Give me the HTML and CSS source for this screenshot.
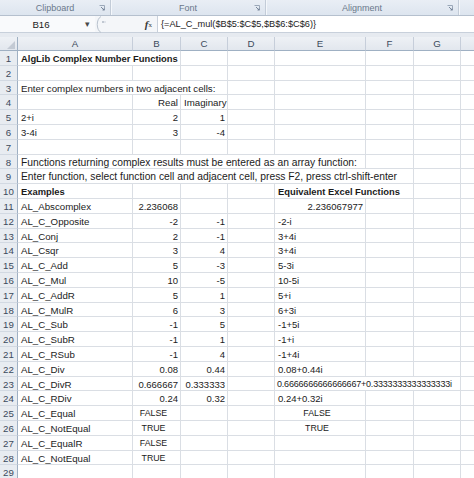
FILE: index.html
```html
<!DOCTYPE html>
<html>
<head>
<meta charset="utf-8">
<link rel="stylesheet" href="styles.css">
</head>
<body>
<div class="app">
  <div class="ribbon">
    <div class="grp g1"><span>Clipboard</span><i class="launch"><svg width="6" height="6" viewBox="0 0 6 6"><path d="M0.5 0.5H5.5V5.5" fill="none" stroke="#9aa7b8" stroke-width="1"/><path d="M2 2L5 5M3.5 5H5V3.5" fill="none" stroke="#6e7e93" stroke-width="0.9"/></svg></i></div>
    <div class="grp g2"><span>Font</span><i class="launch"><svg width="6" height="6" viewBox="0 0 6 6"><path d="M0.5 0.5H5.5V5.5" fill="none" stroke="#9aa7b8" stroke-width="1"/><path d="M2 2L5 5M3.5 5H5V3.5" fill="none" stroke="#6e7e93" stroke-width="0.9"/></svg></i></div>
    <div class="grp g3"><span>Alignment</span><i class="launch"><svg width="6" height="6" viewBox="0 0 6 6"><path d="M0.5 0.5H5.5V5.5" fill="none" stroke="#9aa7b8" stroke-width="1"/><path d="M2 2L5 5M3.5 5H5V3.5" fill="none" stroke="#6e7e93" stroke-width="0.9"/></svg></i></div>
    <div class="grp g4"></div>
  </div>
  <div class="fbar">
    <div class="namebox"><span class="ref">B16</span><span class="drop">&#9662;</span></div>
    <div class="splitter"><svg width="14" height="17" viewBox="0 0 14 17"><path d="M6 0.5C1 3 1 14 6 16.5" fill="none" stroke="#b9c2ce" stroke-width="1"/><circle cx="8" cy="6" r="1" fill="#b0b8c4"/><circle cx="10" cy="6" r="0.8" fill="#c7ced8"/></svg></div>
    <div class="fx"><i>f</i><span>x</span></div>
    <div class="formula">{=AL_C_mul($B$5:$C$5,$B$6:$C$6)}</div>
  </div>
  <div class="gap"></div>
  <div class="sheet">
    <div class="corner"><svg width="8" height="8" viewBox="0 0 8 8"><path d="M8 0V8H0Z" fill="#c3cad4"/></svg></div>
    <div class="ch">A</div><div class="ch">B</div><div class="ch">C</div><div class="ch">D</div><div class="ch">E</div><div class="ch">F</div><div class="ch">G</div><div class="ch"></div>

    <div class="rh">1</div><div class="c b s2">AlgLib Complex Number Functions</div><div class="c"></div><div class="c"></div><div class="c"></div><div class="c"></div><div class="c"></div><div class="c"></div>
    <div class="rh">2</div><div class="c"></div><div class="c"></div><div class="c"></div><div class="c"></div><div class="c"></div><div class="c"></div><div class="c"></div><div class="c"></div>
    <div class="rh">3</div><div class="c s3">Enter complex numbers in two adjacent cells:</div><div class="c"></div><div class="c"></div><div class="c"></div><div class="c"></div><div class="c"></div>
    <div class="rh">4</div><div class="c"></div><div class="c r">Real</div><div class="c r">Imaginary</div><div class="c"></div><div class="c"></div><div class="c"></div><div class="c"></div><div class="c"></div>
    <div class="rh">5</div><div class="c n">2+i</div><div class="c r n">2</div><div class="c r n">1</div><div class="c"></div><div class="c"></div><div class="c"></div><div class="c"></div><div class="c"></div>
    <div class="rh">6</div><div class="c n">3-4i</div><div class="c r n">3</div><div class="c r n">-4</div><div class="c"></div><div class="c"></div><div class="c"></div><div class="c"></div><div class="c"></div>
    <div class="rh">7</div><div class="c"></div><div class="c"></div><div class="c"></div><div class="c"></div><div class="c"></div><div class="c"></div><div class="c"></div><div class="c"></div>
    <div class="rh">8</div><div class="c w s5">Functions returning complex results must be entered as an array function:</div><div class="c"></div><div class="c"></div><div class="c"></div>
    <div class="rh">9</div><div class="c w s6">Enter function, select function cell and adjacent cell, press F2, press ctrl-shift-enter</div><div class="c"></div><div class="c"></div>
    <div class="rh">10</div><div class="c b">Examples</div><div class="c"></div><div class="c"></div><div class="c"></div><div class="c b s2">Equivalent Excel Functions</div><div class="c"></div><div class="c"></div>
    <div class="rh">11</div><div class="c">AL_Abscomplex</div><div class="c r n">2.236068</div><div class="c"></div><div class="c"></div><div class="c r n">2.236067977</div><div class="c"></div><div class="c"></div><div class="c"></div>
    <div class="rh">12</div><div class="c">AL_C_Opposite</div><div class="c r n">-2</div><div class="c r n">-1</div><div class="c"></div><div class="c n">-2-i</div><div class="c"></div><div class="c"></div><div class="c"></div>
    <div class="rh">13</div><div class="c">AL_Conj</div><div class="c r n">2</div><div class="c r n">-1</div><div class="c"></div><div class="c n">3+4i</div><div class="c"></div><div class="c"></div><div class="c"></div>
    <div class="rh">14</div><div class="c">AL_Csqr</div><div class="c r n">3</div><div class="c r n">4</div><div class="c"></div><div class="c n">3+4i</div><div class="c"></div><div class="c"></div><div class="c"></div>
    <div class="rh">15</div><div class="c">AL_C_Add</div><div class="c r n">5</div><div class="c r n">-3</div><div class="c"></div><div class="c n">5-3i</div><div class="c"></div><div class="c"></div><div class="c"></div>
    <div class="rh">16</div><div class="c">AL_C_Mul</div><div class="c r n">10</div><div class="c r n">-5</div><div class="c"></div><div class="c n">10-5i</div><div class="c"></div><div class="c"></div><div class="c"></div>
    <div class="rh">17</div><div class="c">AL_C_AddR</div><div class="c r n">5</div><div class="c r n">1</div><div class="c"></div><div class="c n">5+i</div><div class="c"></div><div class="c"></div><div class="c"></div>
    <div class="rh">18</div><div class="c">AL_C_MulR</div><div class="c r n">6</div><div class="c r n">3</div><div class="c"></div><div class="c n">6+3i</div><div class="c"></div><div class="c"></div><div class="c"></div>
    <div class="rh">19</div><div class="c">AL_C_Sub</div><div class="c r n">-1</div><div class="c r n">5</div><div class="c"></div><div class="c n">-1+5i</div><div class="c"></div><div class="c"></div><div class="c"></div>
    <div class="rh">20</div><div class="c">AL_C_SubR</div><div class="c r n">-1</div><div class="c r n">1</div><div class="c"></div><div class="c n">-1+i</div><div class="c"></div><div class="c"></div><div class="c"></div>
    <div class="rh">21</div><div class="c">AL_C_RSub</div><div class="c r n">-1</div><div class="c r n">4</div><div class="c"></div><div class="c n">-1+4i</div><div class="c"></div><div class="c"></div><div class="c"></div>
    <div class="rh">22</div><div class="c">AL_C_Div</div><div class="c r n">0.08</div><div class="c r n">0.44</div><div class="c"></div><div class="c n">0.08+0.44i</div><div class="c"></div><div class="c"></div><div class="c"></div>
    <div class="rh">23</div><div class="c">AL_C_DivR</div><div class="c r n">0.666667</div><div class="c r n">0.333333</div><div class="c"></div><div class="c n long s3">0.6666666666666667+0.3333333333333333i</div><div class="c"></div>
    <div class="rh">24</div><div class="c">AL_C_RDiv</div><div class="c r n">0.24</div><div class="c r n">0.32</div><div class="c"></div><div class="c n">0.24+0.32i</div><div class="c"></div><div class="c"></div><div class="c"></div>
    <div class="rh">25</div><div class="c">AL_C_Equal</div><div class="c m">FALSE</div><div class="c"></div><div class="c"></div><div class="c m">FALSE</div><div class="c"></div><div class="c"></div><div class="c"></div>
    <div class="rh">26</div><div class="c">AL_C_NotEqual</div><div class="c m">TRUE</div><div class="c"></div><div class="c"></div><div class="c m">TRUE</div><div class="c"></div><div class="c"></div><div class="c"></div>
    <div class="rh">27</div><div class="c">AL_C_EqualR</div><div class="c m">FALSE</div><div class="c"></div><div class="c"></div><div class="c"></div><div class="c"></div><div class="c"></div><div class="c"></div>
    <div class="rh">28</div><div class="c">AL_C_NotEqual</div><div class="c m">TRUE</div><div class="c"></div><div class="c"></div><div class="c"></div><div class="c"></div><div class="c"></div><div class="c"></div>
    <div class="rh">29</div><div class="c"></div><div class="c"></div><div class="c"></div><div class="c"></div><div class="c"></div><div class="c"></div><div class="c"></div><div class="c"></div>
  </div>
</div>
</body>
</html>
```
FILE: styles.css
```css
html, body {
  margin: 0;
  padding: 0;
  background: #ffffff;
  overflow: hidden;
}
.app {
  width: 474px;
  height: 478px;
  overflow: hidden;
  font-family: "Liberation Sans", Arial, sans-serif;
  color: #1b1b1b;
}
.ribbon {
  display: flex;
  height: 15px;
  background: linear-gradient(#e9eef5, #dde5ef);
  border-bottom: 1px solid #b5c0ce;
}
.grp {
  position: relative;
  display: flex;
  align-items: center;
  justify-content: center;
  border-right: 1px solid #c3ccd8;
  box-shadow: 1px 0 0 #f4f7fb;
  font-size: 9px;
  color: #6a788b;
  box-sizing: border-box;
}
.g1 { width: 111px; }
.g2 { width: 155px; }
.g3 { width: 193px; }
.g4 { flex: 1; border-right: none; box-shadow: none; }
.launch {
  position: absolute;
  right: 5px;
  top: 5px;
  width: 6px;
  height: 6px;
  display: block;
}
.launch svg { display: block; }
.fbar {
  display: flex;
  height: 17px;
  background: #f4f6f9;
  border-bottom: 1px solid #c8d0db;
  box-sizing: border-box;
}
.namebox {
  width: 95px;
  display: flex;
  align-items: center;
  background: #f9fafc;
  box-sizing: border-box;
  font-size: 9.7px;
}
.ref {
  width: 82px;
  text-align: center;
  box-sizing: border-box;
}
.drop {
  font-size: 9px;
  color: #4a4a4a;
  margin-left: 3px;
}
.splitter {
  width: 14px;
  display: flex;
}
.splitter svg { display: block; }
.fx {
  width: 48px;
  display: flex;
  align-items: center;
  justify-content: flex-end;
  padding-right: 5px;
  box-sizing: border-box;
  font-family: "Liberation Serif", serif;
  font-size: 10px;
  color: #3a3a3a;
}
.fx i { font-weight: bold; font-size: 11px; }
.fx span { font-size: 7px; position: relative; top: 1px; }
.formula {
  flex: 1;
  background: #ffffff;
  border-left: 1px solid #c8d0db;
  padding-left: 3px;
  line-height: 16px;
  font-size: 9.2px;
  white-space: nowrap;
}
.gap {
  height: 4px;
  background: #e6eaf0;
}
.sheet {
  display: grid;
  grid-template-columns: 18px 115px 48px 47px 47px 91px 48px 47px 40px;
  grid-template-rows: 14px;
  grid-auto-rows: 14.8px;
  font-size: 9.7px;
}
.corner, .ch, .rh {
  background: linear-gradient(#eef1f5, #e2e7ee);
  color: #3c4a5c;
  box-sizing: border-box;
  border-right: 1px solid #c6ceda;
  border-bottom: 1px solid #c6ceda;
  text-align: center;
  white-space: nowrap;
  overflow: hidden;
}
.corner {
  display: flex;
  align-items: flex-end;
  justify-content: flex-end;
  padding: 0 2px 1px 0;
  border-bottom-color: #9fb0c3;
  border-right-color: #9fb0c3;
}
.corner svg { display: block; }
.ch {
  line-height: 13px;
  border-bottom-color: #9fb0c3;
}
.rh {
  line-height: 13px;
  padding-top: 1px;
  background: #e8ecf1;
  border-right-color: #9fb0c3;
  border-bottom-color: #d2d9e2;
}
.c {
  box-sizing: border-box;
  border-right: 1px solid #dadee4;
  border-bottom: 1px solid #dadee4;
  padding: 1px 2px 0 3px;
  line-height: 13px;
  white-space: nowrap;
  overflow: hidden;
}
.r { text-align: right; padding-right: 2px; }
.n { font-size: 9.5px; }
.long { font-size: 9px; letter-spacing: -0.2px; padding-left: 2px; padding-right: 0; }
.w { font-size: 10.3px; }
.m { text-align: center; padding-left: 0; padding-right: 6px; font-size: 8.8px; }
.b { font-weight: bold; font-size: 9.4px; }
.s2 { grid-column: span 2; }
.s3 { grid-column: span 3; }
.s5 { grid-column: span 5; }
.s6 { grid-column: span 6; }
```
